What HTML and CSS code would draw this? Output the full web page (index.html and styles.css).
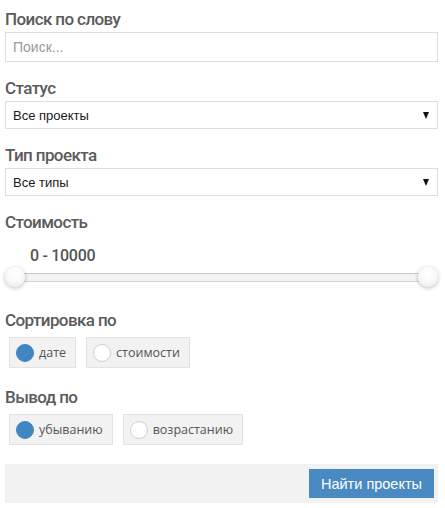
FILE: index.html
```html
<!DOCTYPE html>
<html lang="ru">
<head>
<meta charset="utf-8">
<title>Фильтр проектов</title>
<link rel="stylesheet" href="styles.css">
</head>
<body>
<form class="filter">
  <div class="field">
    <div class="label">Поиск по слову</div>
    <input class="text-input" type="text" placeholder="Поиск...">
  </div>
  <div class="field">
    <div class="label">Статус</div>
    <div class="select-wrap">
      <select class="select"><option>Все проекты</option></select>
    </div>
  </div>
  <div class="field">
    <div class="label">Тип проекта</div>
    <div class="select-wrap">
      <select class="select"><option>Все типы</option></select>
    </div>
  </div>
  <div class="field">
    <div class="label">Стоимость</div>
    <div class="range">
      <div class="range-value">0 - 10000</div>
      <div class="range-track">
        <span class="handle handle-left"></span>
        <span class="handle handle-right"></span>
      </div>
    </div>
  </div>
  <div class="field field-sort">
    <div class="label">Сортировка по</div>
    <div class="radios">
      <label class="radio"><span class="dot checked"></span><span>дате</span></label>
      <label class="radio"><span class="dot"></span><span>стоимости</span></label>
    </div>
  </div>
  <div class="field field-order">
    <div class="label">Вывод по</div>
    <div class="radios">
      <label class="radio"><span class="dot checked"></span><span>убыванию</span></label>
      <label class="radio"><span class="dot"></span><span>возрастанию</span></label>
    </div>
  </div>
  <div class="footer">
    <button type="button" class="submit">Найти проекты</button>
  </div>
</form>
</body>
</html>
```

FILE: styles.css
```css
html, body {
  margin: 0;
  padding: 0;
  background: #fff;
}

.filter {
  width: 433px;
  margin-left: 5px;
  padding-top: 9px;
  display: flex;
  flex-direction: column;
}

.field {
  display: flex;
  flex-direction: column;
  margin-bottom: 16px;
}

.label {
  font-family: Roboto, "Liberation Sans", sans-serif;
  font-weight: 500;
  font-size: 17px;
  line-height: 20px;
  letter-spacing: -0.6px;
  color: #5b5b5b;
  margin-bottom: 3px;
}

.text-input {
  box-sizing: border-box;
  height: 30px;
  width: 100%;
  margin: 0;
  border: 1px solid #dedede;
  padding: 0 7px;
  font-family: "Liberation Sans", Arial, sans-serif;
  font-size: 14px;
  color: #333;
  outline: none;
}

.text-input::placeholder {
  color: #9a9a9a;
}

.select-wrap {
  position: relative;
}

.select {
  -webkit-appearance: none;
  appearance: none;
  box-sizing: border-box;
  width: 100%;
  height: 28px;
  margin: 0;
  border: 1px solid #dedede;
  border-radius: 0;
  background: #fff;
  padding: 0 7px;
  font-family: "Liberation Sans", Arial, sans-serif;
  font-size: 13px;
  color: #1a1a1a;
  outline: none;
}

.select-wrap::after {
  content: "";
  position: absolute;
  right: 9px;
  top: 11px;
  width: 0;
  height: 0;
  border-left: 3.5px solid transparent;
  border-right: 3.5px solid transparent;
  border-top: 7px solid #111;
  pointer-events: none;
}

.range {
  display: flex;
  flex-direction: column;
  padding-top: 11px;
}

.range-value {
  font-family: Roboto, "Liberation Sans", sans-serif;
  font-weight: 500;
  font-size: 16px;
  line-height: 20px;
  letter-spacing: -0.3px;
  color: #555;
  padding-left: 25px;
  margin-bottom: 7px;
}

.range-track {
  position: relative;
  box-sizing: border-box;
  height: 9px;
  margin: 0 10px;
  background: #f3f3f3;
  border-top: 1px solid #c9c9c9;
  border-bottom: 1px solid #d6d6d6;
  margin-bottom: 5px;
}

.handle {
  position: absolute;
  top: -7px;
  width: 20px;
  height: 20px;
  border-radius: 50%;
  background: radial-gradient(circle at 50% 35%, #ffffff 0%, #fafafa 45%, #e6e6e6 100%);
  box-shadow: 0 1px 4px rgba(0, 0, 0, 0.28);
}

.handle-left {
  left: -10px;
}

.handle-right {
  right: -10px;
}

.field-sort {
  margin-top: 7px;
  margin-bottom: 19px;
}

.field-order {
  margin-bottom: 19px;
}

.field-sort .label,
.field-order .label {
  margin-bottom: 7px;
}

.radios {
  display: flex;
  gap: 10px;
  padding-left: 4px;
}

.radio {
  box-sizing: border-box;
  height: 31px;
  display: flex;
  align-items: center;
  gap: 5px;
  padding: 0 9px 0 6px;
  background: #f2f2f2;
  border: 1px solid #e2e2e2;
  font-family: "Open Sans", "Liberation Sans", sans-serif;
  font-size: 12.5px;
  color: #555;
}

.dot {
  box-sizing: border-box;
  width: 18px;
  height: 18px;
  border-radius: 50%;
  background: #fff;
  border: 1px solid #cfcfcf;
}

.dot.checked {
  background: #4186c2;
  border-color: #4186c2;
}

.footer {
  display: flex;
  justify-content: flex-end;
  background: #f2f2f2;
  padding: 5px 4px 5px 0;
  width: 433px;
  box-sizing: border-box;
}

.submit {
  height: 29px;
  width: 125px;
  border: none;
  border-radius: 0;
  margin: 0;
  padding: 0;
  background: #4a8ac3;
  color: #fff;
  font-family: "Liberation Sans", Arial, sans-serif;
  font-size: 14.5px;
}
```
